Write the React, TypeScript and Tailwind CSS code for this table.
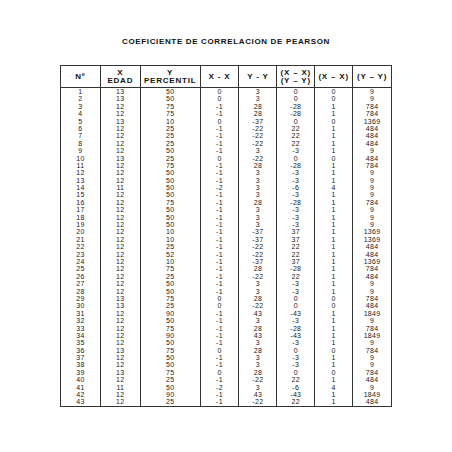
const rows: string[][] = [
  ["1", "13", "50", "0", "3", "0", "0", "9"],
  ["2", "13", "50", "0", "3", "0", "0", "9"],
  ["3", "12", "75", "-1", "28", "-28", "1", "784"],
  ["4", "12", "75", "-1", "28", "-28", "1", "784"],
  ["5", "13", "10", "0", "-37", "0", "0", "1369"],
  ["6", "12", "25", "-1", "-22", "22", "1", "484"],
  ["7", "12", "25", "-1", "-22", "22", "1", "484"],
  ["8", "12", "25", "-1", "-22", "22", "1", "484"],
  ["9", "12", "50", "-1", "3", "-3", "1", "9"],
  ["10", "13", "25", "0", "-22", "0", "0", "484"],
  ["11", "12", "75", "-1", "28", "-28", "1", "784"],
  ["12", "12", "50", "-1", "3", "-3", "1", "9"],
  ["13", "12", "50", "-1", "3", "-3", "1", "9"],
  ["14", "11", "50", "-2", "3", "-6", "4", "9"],
  ["15", "12", "50", "-1", "3", "-3", "1", "9"],
  ["16", "12", "75", "-1", "28", "-28", "1", "784"],
  ["17", "12", "50", "-1", "3", "-3", "1", "9"],
  ["18", "12", "50", "-1", "3", "-3", "1", "9"],
  ["19", "12", "50", "-1", "3", "-3", "1", "9"],
  ["20", "12", "10", "-1", "-37", "37", "1", "1369"],
  ["21", "12", "10", "-1", "-37", "37", "1", "1369"],
  ["22", "12", "25", "-1", "-22", "22", "1", "484"],
  ["23", "12", "52", "-1", "-22", "22", "1", "484"],
  ["24", "12", "10", "-1", "-37", "37", "1", "1369"],
  ["25", "12", "75", "-1", "28", "-28", "1", "784"],
  ["26", "12", "25", "-1", "-22", "22", "1", "484"],
  ["27", "12", "50", "-1", "3", "-3", "1", "9"],
  ["28", "12", "50", "-1", "3", "-3", "1", "9"],
  ["29", "13", "75", "0", "28", "0", "0", "784"],
  ["30", "13", "25", "0", "-22", "0", "0", "484"],
  ["31", "12", "90", "-1", "43", "-43", "1", "1849"],
  ["32", "12", "50", "-1", "3", "-3", "1", "9"],
  ["33", "12", "75", "-1", "28", "-28", "1", "784"],
  ["34", "12", "90", "-1", "43", "-43", "1", "1849"],
  ["35", "12", "50", "-1", "3", "-3", "1", "9"],
  ["36", "13", "75", "0", "28", "0", "0", "784"],
  ["37", "12", "50", "-1", "3", "-3", "1", "9"],
  ["38", "12", "50", "-1", "3", "-3", "1", "9"],
  ["39", "13", "75", "0", "28", "0", "0", "784"],
  ["40", "12", "25", "-1", "-22", "22", "1", "484"],
  ["41", "11", "50", "-2", "3", "-6", "4", "9"],
  ["42", "12", "90", "-1", "43", "-43", "1", "1849"],
  ["43", "12", "25", "-1", "-22", "22", "1", "484"],
];

const headers: string[][] = [
  ["Nº"],
  ["X", "EDAD"],
  ["Y", "PERCENTIL"],
  ["X - X"],
  ["Y - Y"],
  ["(X – X)", "(Y – Y)"],
  ["(X – X)"],
  ["(Y – Y)"],
];

// column widths measured off the sheet
const widths = ["w-[39px]", "w-[40px]", "w-[60px]", "w-[39px]", "w-[38px]", "w-[38px]", "w-[38px]", "w-[39px]"];

export default function App() {
  return (
    <div className="w-[452px] h-[452px] bg-white text-[#1a1a1a] font-['Liberation_Sans',Arial,sans-serif]">
      <div className="pt-[37px] text-center text-[8px] leading-[10px] font-bold tracking-[0.65px] text-[#111]">
        COEFICIENTE DE CORRELACION DE PEARSON
      </div>

      <div className="mt-[18px] mx-auto w-[332px] border border-[#333]">
        {/* Header */}
        <div className="flex border-b border-[#333]">
          {headers.map((h, i) => (
            <div
              key={i}
              className={`${widths[i]} h-[21px] flex flex-col items-center justify-center text-[8px] leading-[8px] font-bold tracking-[0.8px] text-[#111] ${i > 0 ? "border-l border-[#333]" : ""}`}
            >
              {h.map((line) => (
                <span key={line}>{line}</span>
              ))}
            </div>
          ))}
        </div>

        {/* Body columns */}
        <div className="flex">
          {widths.map((w, c) => (
            <div key={c} className={`${w} flex flex-col ${c > 0 ? "border-l border-[#333]" : ""}`}>
              {rows.map((r, i) => (
                <div key={i} className="h-[7.4px] leading-[7.4px] text-center text-[7px] tracking-[0.3px] text-[#1a1a1a]">
                  {r[c]}
                </div>
              ))}
            </div>
          ))}
        </div>
      </div>
    </div>
  );
}
